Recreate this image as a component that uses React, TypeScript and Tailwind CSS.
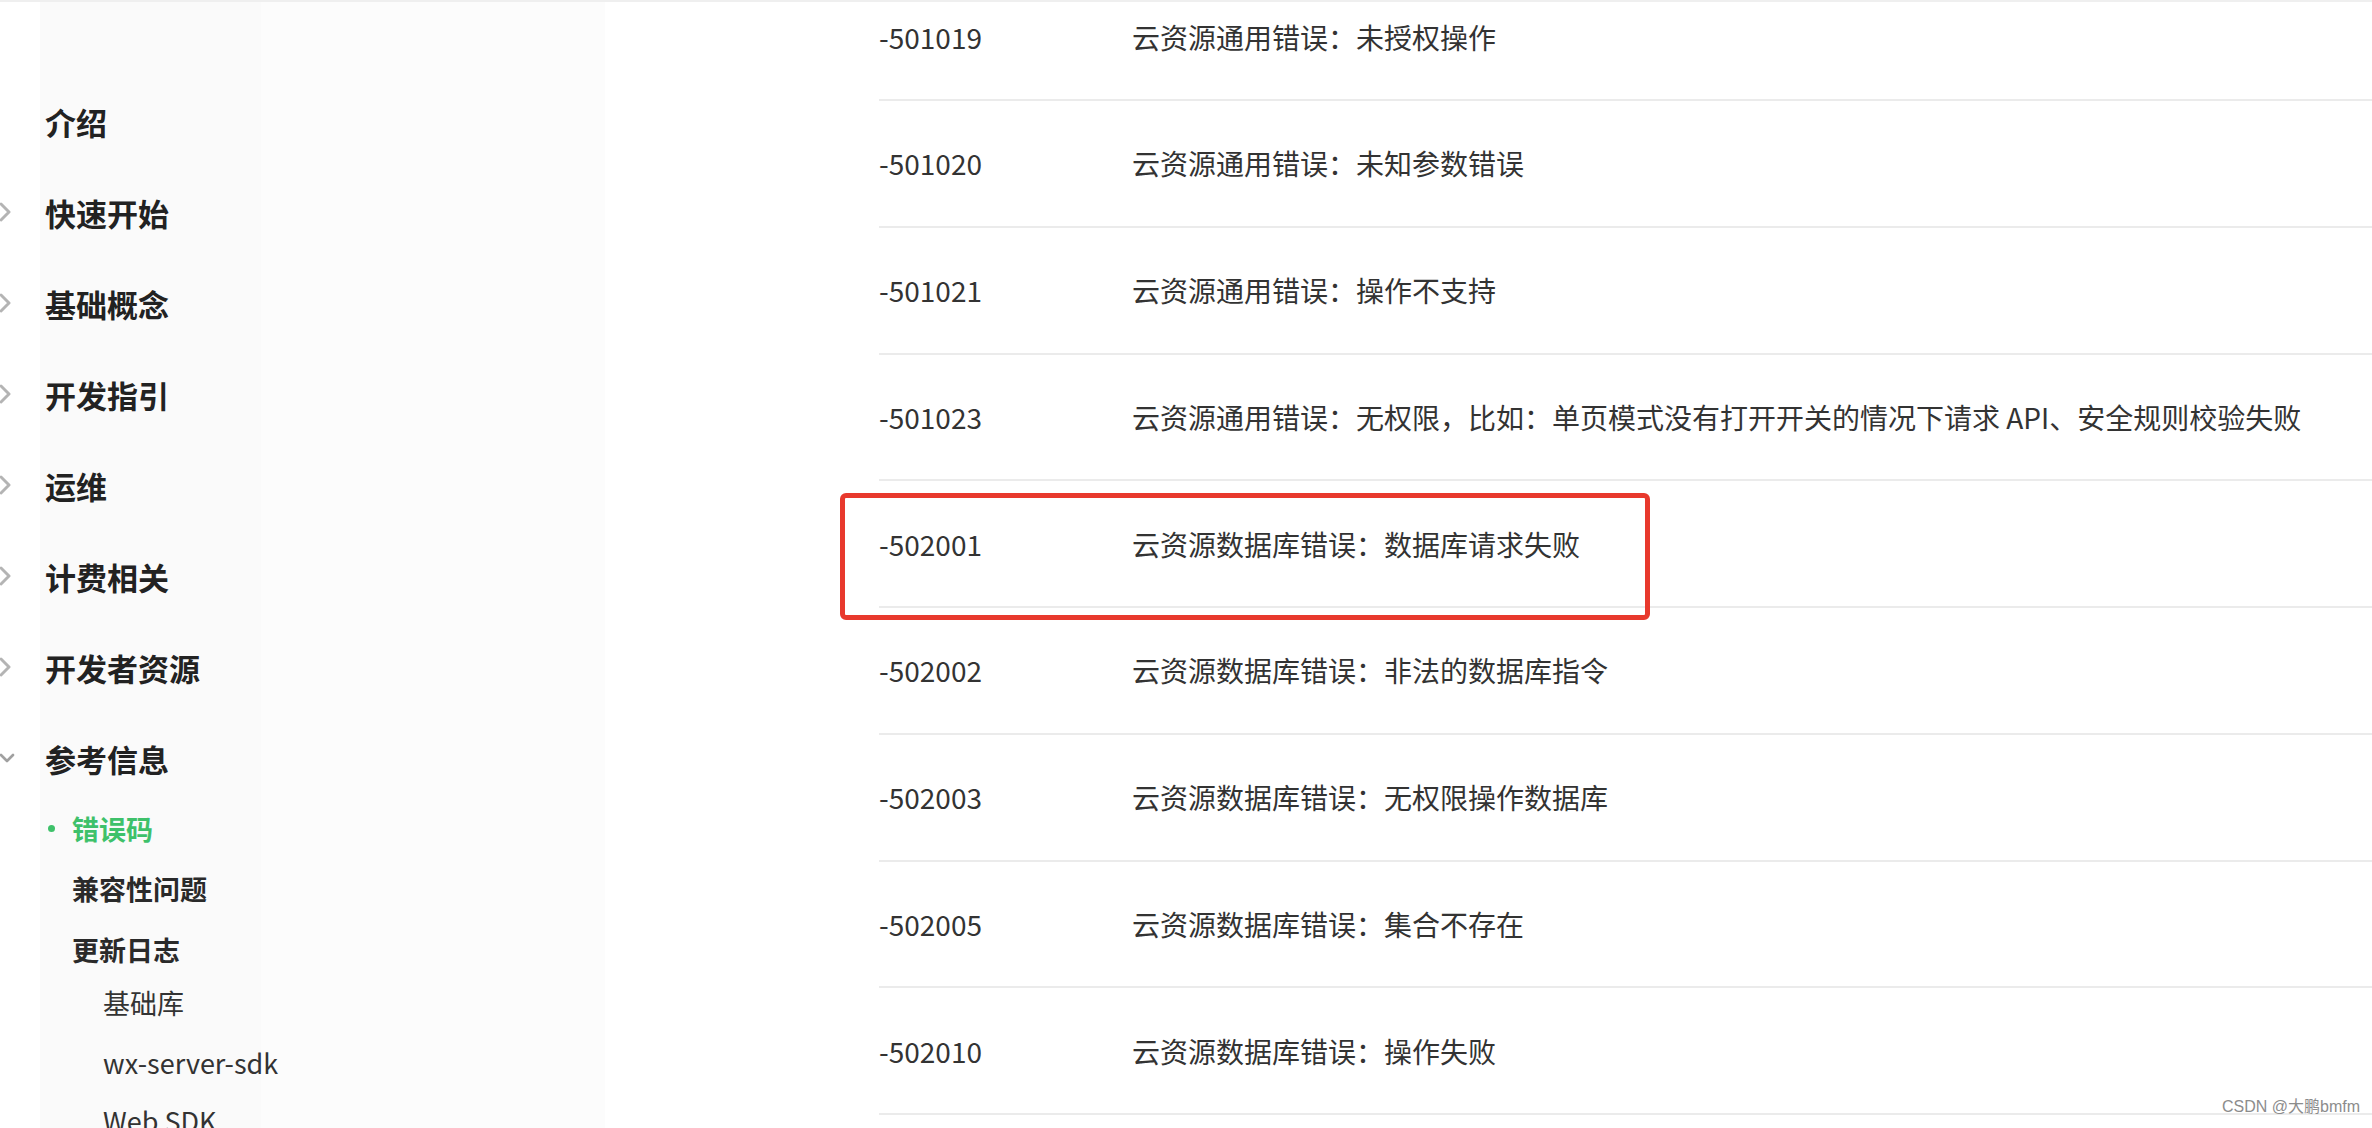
import React from "react";

const FONT = { fontFamily: '"Noto Sans CJK SC", "Microsoft YaHei", sans-serif' };

type NavItem = {
  label: string;
  box: string;
  level: 0 | 1 | 2;
  chevron?: "right" | "down";
  active?: boolean;
};

const nav: NavItem[] = [
  { label: "介绍", box: "h-[91px]", level: 0 },
  { label: "快速开始", box: "h-[91px]", level: 0, chevron: "right" },
  { label: "基础概念", box: "h-[91px]", level: 0, chevron: "right" },
  { label: "开发指引", box: "h-[91px]", level: 0, chevron: "right" },
  { label: "运维", box: "h-[91px]", level: 0, chevron: "right" },
  { label: "计费相关", box: "h-[91px]", level: 0, chevron: "right" },
  { label: "开发者资源", box: "h-[91px]", level: 0, chevron: "right" },
  { label: "参考信息", box: "h-[91px]", level: 0, chevron: "down" },
  { label: "错误码", box: "mt-[4.5px] h-[40px]", level: 1, active: true },
  { label: "兼容性问题", box: "mt-[20.5px] h-[40px]", level: 1 },
  { label: "更新日志", box: "mt-[20.5px] h-[40px]", level: 1 },
  { label: "基础库", box: "mt-[13px] h-[40px]", level: 2 },
  { label: "wx-server-sdk", box: "mt-[20.5px] h-[40px]", level: 2 },
  { label: "Web SDK", box: "mt-[17.5px] h-[40px]", level: 2 },
];

const rows: [string, string][] = [
  ["-501019", "云资源通用错误：未授权操作"],
  ["-501020", "云资源通用错误：未知参数错误"],
  ["-501021", "云资源通用错误：操作不支持"],
  ["-501023", "云资源通用错误：无权限，比如：单页模式没有打开开关的情况下请求 API、安全规则校验失败"],
  ["-502001", "云资源数据库错误：数据库请求失败"],
  ["-502002", "云资源数据库错误：非法的数据库指令"],
  ["-502003", "云资源数据库错误：无权限操作数据库"],
  ["-502005", "云资源数据库错误：集合不存在"],
  ["-502010", "云资源数据库错误：操作失败"],
];

function ChevronRight() {
  return (
    <svg width="16" height="24" viewBox="0 0 16 24" className="-ml-[3px] shrink-0">
      <path d="M4 4 L12 12 L4 20" fill="none" stroke="#b4b4b4" strokeWidth="3" strokeLinecap="round" strokeLinejoin="round" />
    </svg>
  );
}

function ChevronDown() {
  return (
    <svg width="20" height="14" viewBox="0 0 20 14" className="-ml-[2px] shrink-0">
      <path d="M3 4 L9 10 L15 4" fill="none" stroke="#a0a0a0" strokeWidth="2.6" strokeLinecap="round" strokeLinejoin="round" />
    </svg>
  );
}

function NavRow({ item }: { item: NavItem }) {
  if (item.level === 0) {
    return (
      <div className={`${item.box} flex items-center`}>
        <div className="w-[45px] flex items-center overflow-hidden">
          {item.chevron === "right" && <ChevronRight />}
          {item.chevron === "down" && <ChevronDown />}
        </div>
        <span className="text-[31px] leading-none font-semibold text-[#222222]">{item.label}</span>
      </div>
    );
  }
  if (item.level === 1) {
    return (
      <div className={`${item.box} flex items-center`}>
        <div className="w-[72px] flex items-center justify-start pl-[48px]">
          {item.active && <span className="block w-[7px] h-[7px] rounded-full bg-[#3ec16a]" />}
        </div>
        <span
          className={`text-[27px] leading-none font-semibold ${item.active ? "text-[#3ec16a]" : "text-[#2a2a2a]"}`}
        >
          {item.label}
        </span>
      </div>
    );
  }
  return (
    <div className={`${item.box} flex items-center pl-[103px]`}>
      <span className="text-[27px] leading-none text-[#333333]">{item.label}</span>
    </div>
  );
}

export default function App() {
  return (
    <div className="relative w-full h-[1128px] overflow-hidden bg-white" style={FONT}>
      <div className="h-[2px] w-full bg-[#efefef]" />
      <div className="flex h-[1126px]">
        <aside className="w-[605px] shrink-0 flex">
          <div className="w-[40px] bg-white" />
          <div className="flex-1 flex">
            <div className="w-[221px] bg-[#fafafa]" />
            <div className="flex-1 bg-[#fcfcfc]" />
          </div>
        </aside>
        <main className="flex-1 pl-[274px]">
          <div className="mt-[-27.75px]">
            {rows.map(([code, desc]) => (
              <div
                key={code}
                className="h-[126.75px] flex items-center border-b-2 border-[#ebebeb] text-[28px] leading-none text-[#333333]"
              >
                <div className="w-[253px] shrink-0">{code}</div>
                <div className="whitespace-nowrap">{desc}</div>
              </div>
            ))}
          </div>
        </main>
      </div>

      {/* sidebar navigation overlaid on its background strips */}
      <nav className="absolute left-0 top-[75.5px] w-[605px] overflow-hidden">
        {nav.map((item) => (
          <NavRow key={item.label} item={item} />
        ))}
      </nav>

      {/* red annotation box */}
      <div className="absolute left-[840px] top-[493px] w-[810px] h-[127px] border-[5px] border-[#e8392d] rounded-[6px]" />

      {/* watermark */}
      <div
        className="absolute right-[12px] top-[1099px] text-[16px] leading-none text-[#8c8c8c]"
        style={{ fontFamily: '"Liberation Sans", "Noto Sans CJK SC", sans-serif' }}
      >
        CSDN @大鹏bmfm
      </div>
    </div>
  );
}
